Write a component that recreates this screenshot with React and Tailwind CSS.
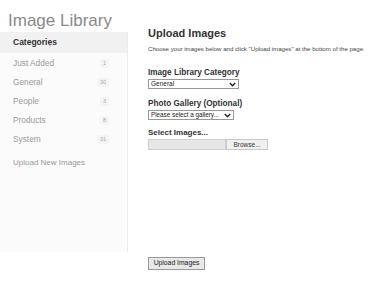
export default function App() {
  const cats = [
    ["Just Added", "1"],
    ["General", "30"],
    ["People", "3"],
    ["Products", "8"],
    ["System", "31"],
  ];
  return (
    <div className="w-[374px] h-[283px] bg-white flex overflow-hidden" style={{ fontFamily: '"Liberation Sans", Arial, sans-serif' }}>
      <div className="w-[128px] shrink-0 flex flex-col">
        <div className="pl-[8px] pt-[11px] h-[32px] text-[17px] leading-[20px] text-[#8a8a8a]">Image Library</div>
        <div className="flex flex-col bg-[#fbfbfb] border-r border-[#ececec] h-[220px]">
          <div className="h-[21px] bg-[#f1f1f1] pl-[13px] flex items-center text-[8.5px] font-bold text-[#333]">Categories</div>
          <div className="flex flex-col pt-[1px]">
            {cats.map(([n, c]) => (
              <div key={n} className="h-[19px] flex items-center justify-between pl-[13px] pr-[18px] text-[8.3px] text-[#9a9a9a]">
                <span>{n}</span>
                <span className="text-[5.5px] text-[#aaa] bg-[#f4f4f4] px-[3px] rounded-[2px]">{c}</span>
              </div>
            ))}
          </div>
          <div className="pl-[13px] pt-[8px] text-[8px] text-[#999]">Upload New Images</div>
        </div>
      </div>
      <div className="flex-1 pl-[20px] pt-[27px] flex flex-col">
        <div className="text-[11px] font-bold text-[#333] leading-[13px]">Upload Images</div>
        <div className="text-[6.1px] text-[#444] mt-[5px] leading-[8px] whitespace-nowrap">Choose your images below and click "Upload images" at the bottom of the page.</div>
        <div className="text-[8.2px] font-bold text-[#333] mt-[15px] leading-[10px]">Image Library Category</div>
        <div className="mt-[1px] w-[91px] h-[10px] border border-[#999] bg-white flex items-center justify-between px-[2px] text-[6.5px] text-[#222]">
          <span>General</span>
          <svg width="7" height="5" viewBox="0 0 7 5"><path d="M0.8 1 L3.5 3.8 L6.2 1" fill="none" stroke="#222" strokeWidth="1.4" /></svg>
        </div>
        <div className="text-[8.2px] font-bold text-[#333] mt-[10px] leading-[10px]">Photo Gallery (Optional)</div>
        <div className="mt-[1px] w-[86px] h-[10px] border border-[#999] bg-white flex items-center justify-between px-[2px] text-[6.3px] text-[#222] whitespace-nowrap overflow-hidden">
          <span>Please select a gallery...</span>
          <svg width="7" height="5" viewBox="0 0 7 5" className="shrink-0"><path d="M0.8 1 L3.5 3.8 L6.2 1" fill="none" stroke="#222" strokeWidth="1.4" /></svg>
        </div>
        <div className="text-[8px] font-bold text-[#333] mt-[8px] leading-[10px]">Select Images...</div>
        <div className="mt-[1px] w-[120px] h-[11px] flex">
          <div className="flex-1 bg-[#e6e6e6] border border-[#d0d0d0]"></div>
          <div className="w-[42px] border border-[#c8c8c8] bg-[#f0f0f0] text-[6.5px] text-[#333] flex items-center justify-center">Browse...</div>
        </div>
        <div className="mt-[107px] w-[57px] h-[13px] border border-[#9a9a9a] bg-[#e8e8e8] text-[6.8px] text-[#222] flex items-center justify-center">Upload Images</div>
      </div>
    </div>
  );
}
